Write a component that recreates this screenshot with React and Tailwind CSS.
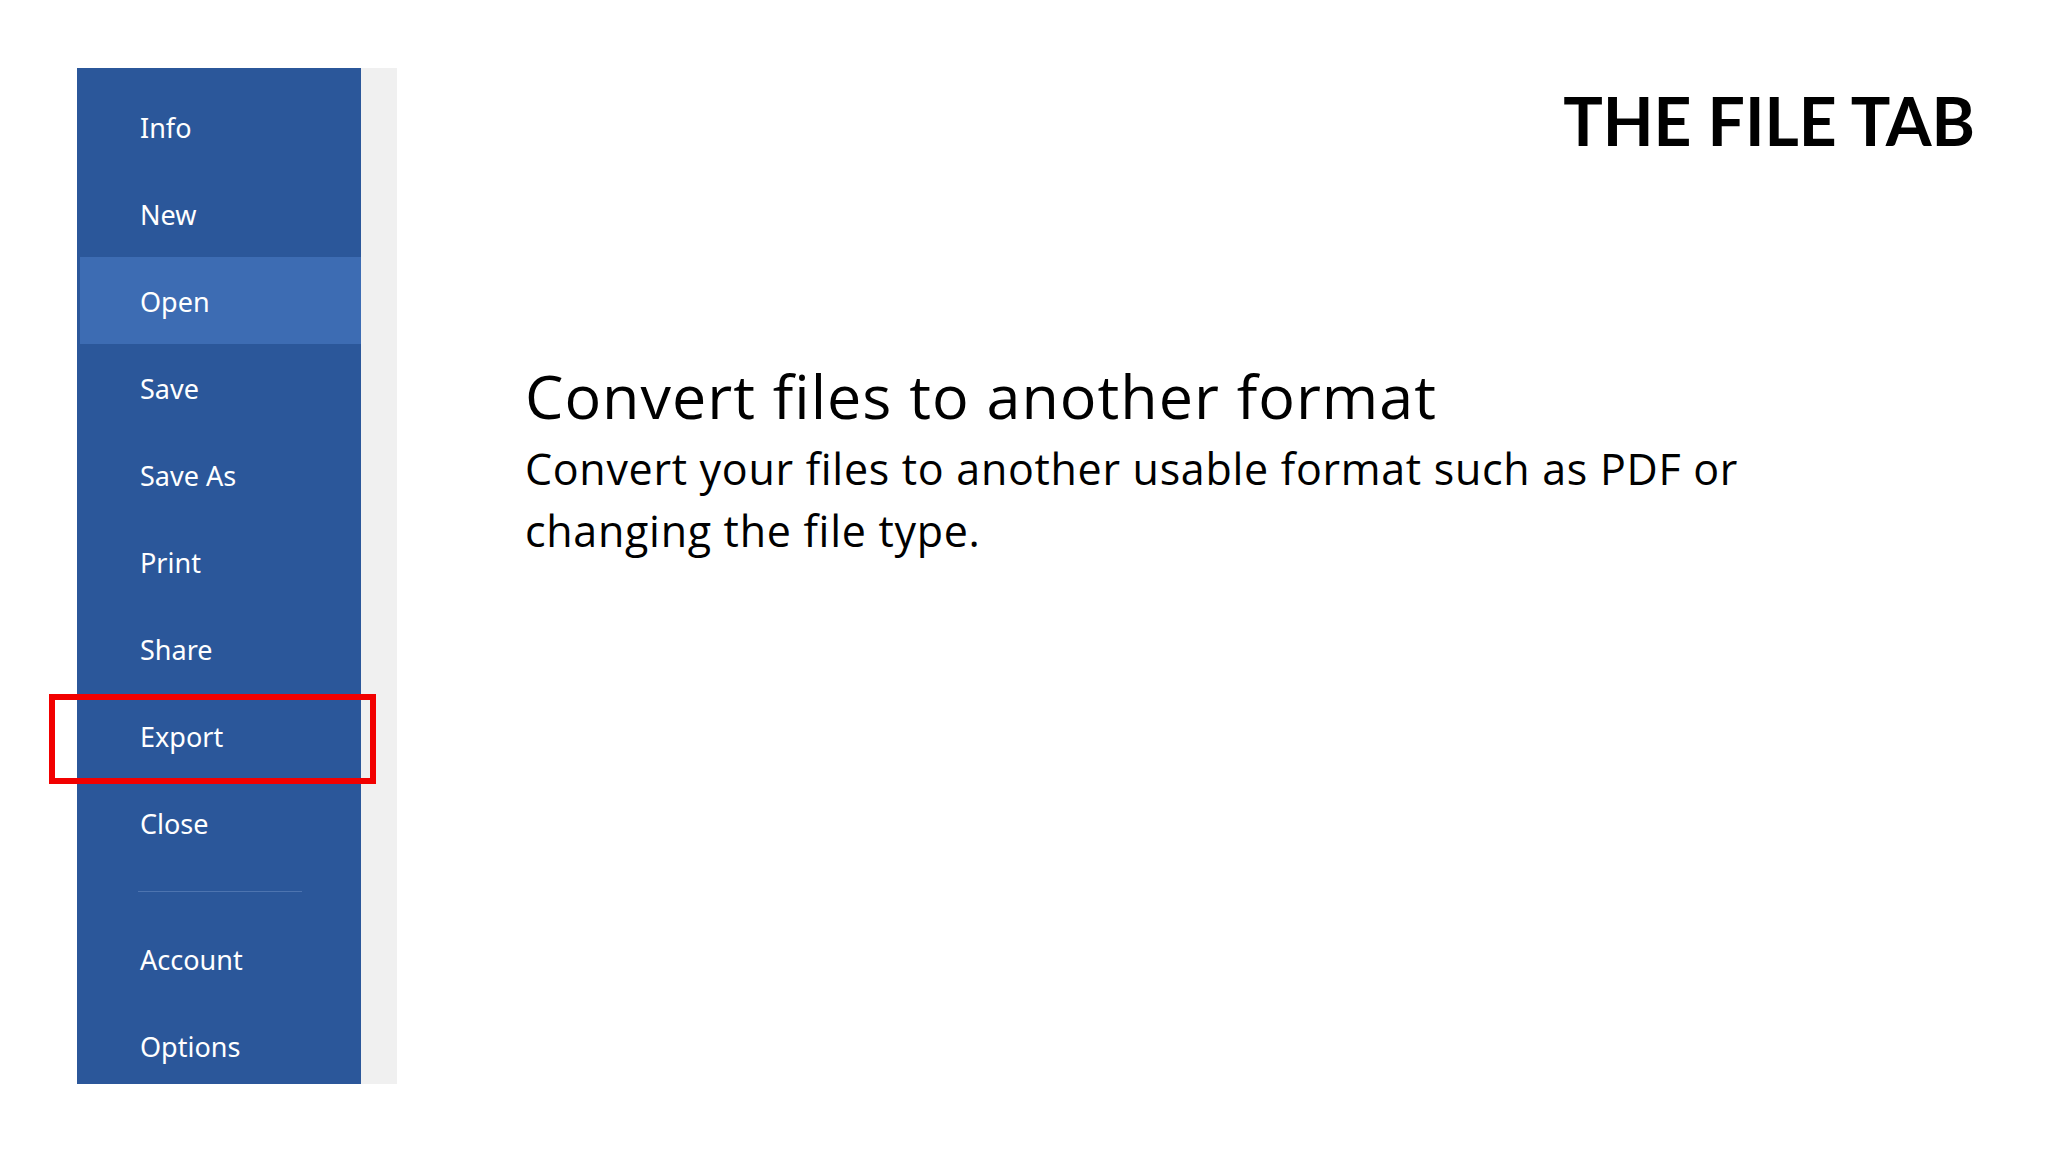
import React from 'react'

const menu = ['Info', 'New', 'Open', 'Save', 'Save As', 'Print', 'Share', 'Export', 'Close']
const bottomMenu = ['Account', 'Options']

function MenuItem({ label, active }) {
  return (
    <div
      className={
        active
          ? 'h-[87px] ml-[3px] pl-[60px] pt-[3px] flex items-center bg-[#3d6cb3] text-white text-[27px]'
          : 'h-[87px] pl-[63px] pt-[3px] flex items-center text-white text-[27px]'
      }
    >
      {label}
    </div>
  )
}

export default function App() {
  return (
    <div className="w-[2048px] h-[1152px] bg-white flex overflow-hidden">
      {/* file tab backstage menu */}
      <div className="pt-[68px] pl-[77px] shrink-0">
        <div className="relative flex">
          <div
            className="w-[284px] h-[1016px] bg-[#2b579a] pt-[15px] overflow-hidden"
            style={{ fontFamily: '"Noto Sans", "Open Sans", sans-serif' }}
          >
            {menu.map(m => (
              <MenuItem key={m} label={m} active={m === 'Open'} />
            ))}
            <div className="ml-[61px] w-[164px] h-px bg-[#4d74b0] mt-[25px] mb-[23px]" />
            {bottomMenu.map(m => (
              <MenuItem key={m} label={m} />
            ))}
          </div>
          <div className="w-[36px] h-[1016px] bg-[#f0f0f0]" />

          {/* highlight box round Export */}
          <div className="absolute left-[-28px] top-[626px] w-[327px] h-[90px] border-[6px] border-[#f20000]" />
        </div>
      </div>

      {/* slide content */}
      <div
        className="flex-1 flex flex-col pl-[128px] pr-[73px] text-black"
        style={{ fontFamily: '"Open Sans", Lato, sans-serif' }}
      >
        <h1
          className="self-end mt-[88px] text-[66px] leading-none font-bold"
          style={{ fontFamily: 'Lato, "Open Sans", sans-serif' }}
        >
          THE FILE TAB
        </h1>
        <h2 className="mt-[211px] text-[61px] leading-none tracking-[1px]">Convert files to another format</h2>
        <p className="mt-[12px] text-[43px] leading-[62px] tracking-[0.7px] max-w-[1300px]">
          Convert your files to another usable format such as PDF or changing the file type.
        </p>
      </div>
    </div>
  )
}
